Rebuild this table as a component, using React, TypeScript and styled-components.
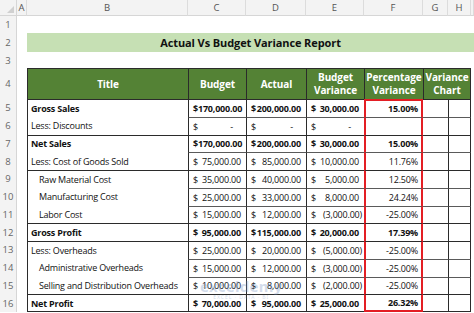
import styled, { createGlobalStyle } from "styled-components";

const GlobalStyle = createGlobalStyle`
  html, body {
    margin: 0;
    padding: 0;
    background: #fff;
  }
  body {
    font-family: "Open Sans", "Liberation Sans", sans-serif;
    color: #111;
  }
  * {
    box-sizing: border-box;
  }
`;

const DARK = "#2b2b2b";
const THIN = "#5a5a5a";
const RED = "#e31e24";

const Sheet = styled.div`
  position: relative;
  width: 474px;
  height: 313px;
  overflow: hidden;
  display: grid;
  grid-template-columns: 17px 10px 161px 58px 60px 58px 59px 25px 23px 1fr;
  grid-template-rows: 16px 17px 19px 16px 31px repeat(12, 17.75px);
  font-size: 9px;
`;

const Corner = styled.div`
  position: relative;
  background: #f3f3f3;
  border-right: 1px solid #d6d6d6;
  border-bottom: 1px solid #d6d6d6;

  &::after {
    content: "";
    position: absolute;
    right: 2px;
    bottom: 2px;
    border-left: 7px solid transparent;
    border-bottom: 7px solid #d0d0d0;
  }
`;

const ColHead = styled.div`
  background: #f3f3f3;
  border-right: 1px solid #dcdcdc;
  border-bottom: 1px solid #d6d6d6;
  color: #555;
  font-size: 9.5px;
  display: flex;
  align-items: center;
  justify-content: center;
`;

const RowNum = styled.div`
  background: #f3f3f3;
  border-right: 1px solid #d6d6d6;
  color: #666;
  font-size: 9.5px;
  display: flex;
  align-items: center;
  justify-content: center;
`;

const Blank = styled.div``;

const TitleBand = styled.div`
  grid-column: 3 / -1;
  background: #c6e0b4;
  font-weight: 700;
  font-size: 11px;
  letter-spacing: -0.1px;
  display: flex;
  align-items: center;
  justify-content: center;
`;

const HeadCell = styled.div<{ $span?: number; $last?: boolean }>`
  grid-column: span ${(p) => p.$span ?? 1};
  background: #548235;
  color: #fff;
  font-weight: 700;
  font-size: 10px;
  line-height: 13px;
  letter-spacing: -0.1px;
  text-align: center;
  display: flex;
  align-items: center;
  justify-content: center;
  border-top: 1.5px solid ${DARK};
  border-left: 1px solid ${DARK};
  border-right: ${(p) => (p.$last ? `1.5px solid ${DARK}` : "none")};
`;

interface CellProps {
  $bold?: boolean;
  $top: string;
  $bottom?: boolean;
}

const BaseCell = styled.div<CellProps>`
  font-weight: ${(p) => (p.$bold ? 700 : 400)};
  letter-spacing: -0.2px;
  border-left: 1px solid ${DARK};
  border-top: ${(p) => p.$top};
  border-bottom: ${(p) => (p.$bottom ? `1.5px solid ${DARK}` : "none")};
  display: flex;
  align-items: center;
  white-space: nowrap;
`;

const LabelCell = styled(BaseCell)<{ $indent?: boolean }>`
  border-left-width: 1.5px;
  padding-left: ${(p) => (p.$indent ? "11px" : "3px")};
`;

const MoneyCell = styled(BaseCell)<{ $neg?: boolean; $dash?: boolean }>`
  justify-content: space-between;
  padding-left: 4px;
  padding-right: ${(p) => (p.$dash ? "13px" : p.$neg ? "2px" : "5px")};
`;

const PctCell = styled(BaseCell)<{ $first?: boolean; $end?: boolean }>`
  justify-content: flex-end;
  padding-right: 3px;
  border-left: 2px solid ${RED};
  border-right: 2px solid ${RED};
  border-top: ${(p) => (p.$first ? `2px solid ${RED}` : p.$top)};
  border-bottom: ${(p) => (p.$end ? `2px solid ${RED}` : "none")};
`;

const ChartCell = styled(BaseCell)<{ $afterRed?: boolean; $last?: boolean }>`
  border-left: ${(p) => (p.$afterRed ? "none" : `1px solid ${DARK}`)};
  border-right: ${(p) => (p.$last ? `1.5px solid ${DARK}` : "none")};
`;

const Watermark = styled.div`
  position: absolute;
  left: 200px;
  top: 279px;
  display: flex;
  flex-direction: column;
  align-items: center;
  color: #6f8fc0;
  opacity: 0.3;
  pointer-events: none;
  font-family: "Noto Sans", sans-serif;

  b {
    font-size: 15px;
    line-height: 15px;
    letter-spacing: 0.3px;
  }
  span {
    font-size: 5px;
    line-height: 6px;
    letter-spacing: 1px;
  }
`;

type Amount = { v: string; neg?: boolean } | null;

interface Line {
  label: string;
  bold?: boolean;
  indent?: boolean;
  group?: boolean;
  budget: Amount;
  actual: Amount;
  variance: Amount;
  pct: string;
}

const rows: Line[] = [
  { label: "Gross Sales", bold: true, budget: { v: "170,000.00" }, actual: { v: "200,000.00" }, variance: { v: "30,000.00" }, pct: "15.00%" },
  { label: "Less: Discounts", budget: null, actual: null, variance: null, pct: "" },
  { label: "Net Sales", bold: true, group: true, budget: { v: "170,000.00" }, actual: { v: "200,000.00" }, variance: { v: "30,000.00" }, pct: "15.00%" },
  { label: "Less: Cost of Goods Sold", budget: { v: "75,000.00" }, actual: { v: "85,000.00" }, variance: { v: "10,000.00" }, pct: "11.76%" },
  { label: "Raw Material Cost", indent: true, group: true, budget: { v: "35,000.00" }, actual: { v: "40,000.00" }, variance: { v: "5,000.00" }, pct: "12.50%" },
  { label: "Manufacturing Cost", indent: true, budget: { v: "25,000.00" }, actual: { v: "33,000.00" }, variance: { v: "8,000.00" }, pct: "24.24%" },
  { label: "Labor Cost", indent: true, budget: { v: "15,000.00" }, actual: { v: "12,000.00" }, variance: { v: "(3,000.00)", neg: true }, pct: "-25.00%" },
  { label: "Gross Profit", bold: true, group: true, budget: { v: "95,000.00" }, actual: { v: "115,000.00" }, variance: { v: "20,000.00" }, pct: "17.39%" },
  { label: "Less: Overheads", group: true, budget: { v: "25,000.00" }, actual: { v: "20,000.00" }, variance: { v: "(5,000.00)", neg: true }, pct: "-25.00%" },
  { label: "Administrative Overheads", indent: true, budget: { v: "15,000.00" }, actual: { v: "12,000.00" }, variance: { v: "(3,000.00)", neg: true }, pct: "-25.00%" },
  { label: "Selling and Distribution Overheads", indent: true, budget: { v: "10,000.00" }, actual: { v: "8,000.00" }, variance: { v: "(2,000.00)", neg: true }, pct: "-25.00%" },
  { label: "Net Profit", bold: true, group: true, budget: { v: "70,000.00" }, actual: { v: "95,000.00" }, variance: { v: "25,000.00" }, pct: "26.32%" },
];

const letters = ["A", "B", "C", "D", "E", "F", "G", "H", ""];

const Money = ({ a, bold, top, bottom }: { a: Amount; bold?: boolean; top: string; bottom: boolean }) => (
  <MoneyCell $bold={bold} $top={top} $bottom={bottom} $neg={a?.neg} $dash={!a}>
    <span>$</span>
    <span>{a ? a.v : "-"}</span>
  </MoneyCell>
);

export default function App() {
  return (
    <>
      <GlobalStyle />
      <Sheet>
        <Corner />
        {letters.map((l, i) => (
          <ColHead key={i}>{l}</ColHead>
        ))}

        <RowNum>1</RowNum>
        {letters.map((_, i) => (
          <Blank key={i} />
        ))}

        <RowNum>2</RowNum>
        <Blank />
        <TitleBand>Actual Vs Budget Variance Report</TitleBand>

        <RowNum>3</RowNum>
        {letters.map((_, i) => (
          <Blank key={i} />
        ))}

        <RowNum>4</RowNum>
        <Blank />
        <HeadCell>Title</HeadCell>
        <HeadCell>Budget</HeadCell>
        <HeadCell>Actual</HeadCell>
        <HeadCell>
          Budget
          <br />
          Variance
        </HeadCell>
        <HeadCell>
          Percentage
          <br />
          Variance
        </HeadCell>
        <HeadCell $span={2} $last>
          Variance
          <br />
          Chart
        </HeadCell>
        <Blank />

        {rows.map((r, i) => {
          const first = i === 0;
          const end = i === rows.length - 1;
          const dark = `1.5px solid ${DARK}`;
          const labelTop = first || r.group ? dark : "none";
          const cellTop = first || r.group ? dark : `1px solid ${THIN}`;
          return [
            <RowNum key={`n${i}`}>{i + 5}</RowNum>,
            <Blank key={`a${i}`} />,
            <LabelCell key={`b${i}`} $bold={r.bold} $indent={r.indent} $top={labelTop} $bottom={end}>
              {r.label}
            </LabelCell>,
            <Money key={`c${i}`} a={r.budget} bold={r.bold} top={cellTop} bottom={end} />,
            <Money key={`d${i}`} a={r.actual} bold={r.bold} top={cellTop} bottom={end} />,
            <Money key={`e${i}`} a={r.variance} bold={r.bold} top={cellTop} bottom={end} />,
            <PctCell key={`f${i}`} $bold={r.bold} $top={cellTop} $bottom={end} $first={first} $end={end}>
              {r.pct}
            </PctCell>,
            <ChartCell key={`g${i}`} $top={cellTop} $bottom={end} $afterRed />,
            <ChartCell key={`h${i}`} $top={cellTop} $bottom={end} $last />,
            <Blank key={`i${i}`} />,
          ];
        })}

        <Watermark>
          <b>exceldemy</b>
          <span>EXCEL · DATA · BI</span>
        </Watermark>
      </Sheet>
    </>
  );
}
